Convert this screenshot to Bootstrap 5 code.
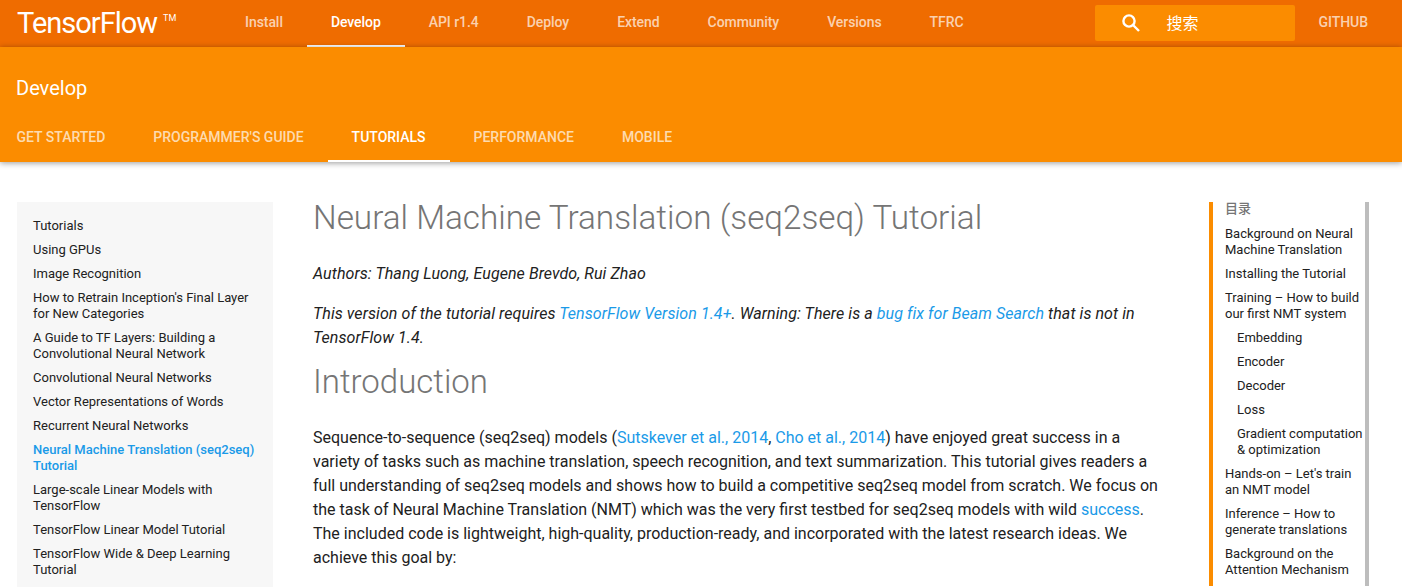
<!DOCTYPE html>
<html lang="en">
  <head>
    <meta charset="UTF-8" />
    <title>Neural Machine Translation (seq2seq) Tutorial</title>
    <link
      rel="stylesheet"
      href="https://cdn.jsdelivr.net/npm/bootstrap@5.3.0/dist/css/bootstrap.min.css"
    />
    <style>
      html, body {
        height: 587px;
        overflow: hidden;
      }
      body {
        font-family: Roboto, "Noto Sans CJK SC", sans-serif;
        color: #212121;
        background-color: #fff;
      }
      a {
        text-decoration: none;
      }

      /* header */
      .top-bar {
        height: 47px;
        background-color: #ef6c00;
        padding-left: 17px;
      }
      .tf-logo {
        width: 204px;
        color: #fff;
        font-size: 29px;
        font-weight: 400;
        line-height: 47px;
        letter-spacing: -1px;
      }
      .tf-logo sup {
        font-size: 9px;
        top: -12px;
        margin-left: 6px;
        letter-spacing: 0;
      }
      .tab-link {
        display: block;
        padding: 0 24px;
        font-size: 14px;
        font-weight: 500;
        color: rgba(255, 255, 255, 0.7);
      }
      .top-bar .tab-link {
        height: 47px;
        line-height: 45px;
        letter-spacing: -0.06px;
      }
      .tab-link.is-active {
        color: #fff;
        border-bottom: 2px solid #fff;
      }
      .search-box {
        width: 200px;
        height: 36px;
        margin-top: 5px;
        margin-left: 107px;
        padding-left: 26px;
        background-color: #fb8c00;
        border-radius: 2px;
        color: #fff;
        font-size: 16px;
        line-height: 37px;
      }
      .search-box svg {
        margin-right: 26px;
        margin-bottom: 4px;
      }
      .sub-bar {
        height: 115px;
        background-color: #fb8c00;
        box-shadow: 0 1px 6px rgba(0, 0, 0, 0.4);
        position: relative;
      }
      .sub-title {
        padding: 29px 16px 0;
        height: 67px;
        color: #fff;
        font-size: 20px;
        line-height: 24px;
      }
      .sub-tabs .tab-link {
        height: 48px;
        line-height: 46px;
        text-transform: uppercase;
      }
      .sub-tabs li:first-child .tab-link {
        padding-left: 16.5px;
      }

      /* page body */
      .page-wrap {
        padding-top: 40px;
      }
      .left-nav {
        flex: 0 0 256px;
        margin-left: 17px;
        padding: 16px 16px;
        background-color: #f7f7f7;
        font-size: 13px;
        line-height: 16px;
      }
      .left-nav li,
      .toc-nav li {
        margin-bottom: 8px;
      }
      .left-nav a,
      .toc-nav a {
        color: #212121;
      }
      .left-nav a.is-current {
        color: #1a9ae8;
        font-weight: 500;
      }
      .article {
        flex: 0 0 848px;
        margin-left: 40px;
        font-size: 16px;
        line-height: 24px;
      }
      .article h1 {
        margin: 0 0 28px;
        font-size: 33.3px;
        font-weight: 300;
        line-height: 32px;
        color: #757575;
      }
      .article h2 {
        margin: 0 0 28px;
        font-size: 33px;
        font-weight: 300;
        line-height: 32px;
        color: #757575;
      }
      .article p {
        margin-bottom: 16px;
      }
      .article em {
        letter-spacing: 0.07px;
      }
      .article a {
        color: #1a9ae8;
      }
      .toc-nav {
        flex: 0 0 160px;
        margin-left: 48px;
        padding: 0 0 0 12px;
        border-left: 4px solid #fb8c00;
        border-right: 4px solid #bdbdbd;
        font-size: 13px;
        line-height: 16px;
      }
      .toc-title {
        color: #757575;
        font-weight: 500;
        line-height: 14px;
        margin-bottom: 10px;
      }
      .toc-nav li.toc-sub {
        padding-left: 12px;
      }
    </style>
  </head>
  <body>
    <header>
      <div class="top-bar d-flex">
        <a class="tf-logo" href="#">TensorFlow<sup>TM</sup></a>
        <ul class="list-unstyled d-flex mb-0">
          <li><a class="tab-link" href="#">Install</a></li>
          <li><a class="tab-link is-active" href="#">Develop</a></li>
          <li><a class="tab-link" href="#">API r1.4</a></li>
          <li><a class="tab-link" href="#">Deploy</a></li>
          <li><a class="tab-link" href="#">Extend</a></li>
          <li><a class="tab-link" href="#">Community</a></li>
          <li><a class="tab-link" href="#">Versions</a></li>
          <li><a class="tab-link" href="#">TFRC</a></li>
        </ul>
        <div class="search-box">
          <svg width="20" height="20" viewBox="0 0 20 20" fill="none" stroke="#fff" stroke-width="2.4" class="align-middle">
            <circle cx="8" cy="8" r="5.6" />
            <path d="M12 12l6 6" />
          </svg>搜索
        </div>
        <a class="tab-link" href="#">GITHUB</a>
      </div>
      <div class="sub-bar">
        <div class="sub-title">Develop</div>
        <ul class="sub-tabs list-unstyled d-flex mb-0">
          <li><a class="tab-link" href="#">Get Started</a></li>
          <li><a class="tab-link" href="#">Programmer's Guide</a></li>
          <li><a class="tab-link is-active" href="#">Tutorials</a></li>
          <li><a class="tab-link" href="#">Performance</a></li>
          <li><a class="tab-link" href="#">Mobile</a></li>
        </ul>
      </div>
    </header>

    <div class="page-wrap d-flex align-items-start">
      <nav class="left-nav">
        <ul class="list-unstyled mb-0">
          <li><a href="#">Tutorials</a></li>
          <li><a href="#">Using GPUs</a></li>
          <li><a href="#">Image Recognition</a></li>
          <li><a href="#">How to Retrain Inception's Final Layer for New Categories</a></li>
          <li><a href="#">A Guide to TF Layers: Building a Convolutional Neural Network</a></li>
          <li><a href="#">Convolutional Neural Networks</a></li>
          <li><a href="#">Vector Representations of Words</a></li>
          <li><a href="#">Recurrent Neural Networks</a></li>
          <li><a class="is-current" href="#">Neural Machine Translation (seq2seq) Tutorial</a></li>
          <li><a href="#">Large-scale Linear Models with TensorFlow</a></li>
          <li><a href="#">TensorFlow Linear Model Tutorial</a></li>
          <li><a href="#">TensorFlow Wide &amp; Deep Learning Tutorial</a></li>
        </ul>
      </nav>

      <main class="article">
        <h1>Neural Machine Translation (seq2seq) Tutorial</h1>
        <p><em>Authors: Thang Luong, Eugene Brevdo, Rui Zhao</em></p>
        <p><em>This version of the tutorial requires <a href="#">TensorFlow Version 1.4+</a>. Warning: There is a <a href="#">bug fix for Beam Search</a> that is not in TensorFlow 1.4.</em></p>
        <h2>Introduction</h2>
        <p>Sequence-to-sequence (seq2seq) models (<a href="#">Sutskever et al., 2014</a>, <a href="#">Cho et al., 2014</a>) have enjoyed great success in a variety of tasks such as machine translation, speech recognition, and text summarization. This tutorial gives readers a full understanding of seq2seq models and shows how to build a competitive seq2seq model from scratch. We focus on the task of Neural Machine Translation (NMT) which was the very first testbed for seq2seq models with wild <a href="#">success</a>. The included code is lightweight, high-quality, production-ready, and incorporated with the latest research ideas. We achieve this goal by:</p>
      </main>

      <nav class="toc-nav">
        <div class="toc-title">目录</div>
        <ul class="list-unstyled mb-0">
          <li><a href="#">Background on Neural Machine Translation</a></li>
          <li><a href="#">Installing the Tutorial</a></li>
          <li><a href="#">Training – How to build our first NMT system</a></li>
          <li class="toc-sub"><a href="#">Embedding</a></li>
          <li class="toc-sub"><a href="#">Encoder</a></li>
          <li class="toc-sub"><a href="#">Decoder</a></li>
          <li class="toc-sub"><a href="#">Loss</a></li>
          <li class="toc-sub"><a href="#">Gradient computation &amp; optimization</a></li>
          <li><a href="#">Hands-on – Let's train an NMT model</a></li>
          <li><a href="#">Inference – How to generate translations</a></li>
          <li><a href="#">Background on the Attention Mechanism</a></li>
        </ul>
      </nav>
    </div>

    <script src="https://cdn.jsdelivr.net/npm/bootstrap@5.3.0/dist/js/bootstrap.bundle.min.js"></script>
  </body>
</html>
